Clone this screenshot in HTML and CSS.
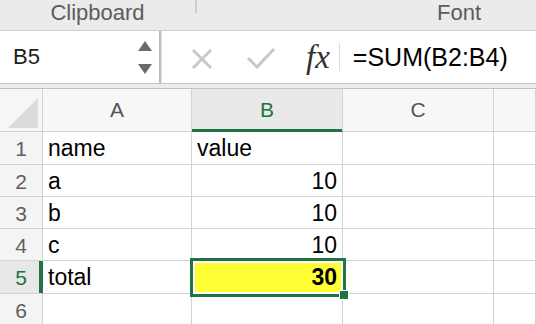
FILE: index.html
```html
<!DOCTYPE html>
<html lang="en">

<head>
  <meta charset="utf-8">
  <meta name="viewport" content="width=device-width, initial-scale=1">
  <title>Sheet</title>
  <link rel="stylesheet" href="styles.css">
</head>

<body>
  <!-- Ribbon group labels -->
  <div class="ribbon">
    <div class="group clip">Clipboard</div>
    <div class="group-sep"></div>
    <div class="group font">Font</div>
  </div>

  <!-- Name box + formula bar -->
  <div class="fbar">
    <div class="namebox">
      <span class="ref">B5</span>
      <span class="spin">
        <svg width="14" height="10" viewBox="0 0 14 10"><path d="M7 0 L14 10 L0 10 Z" fill="#6b6b6b"/></svg>
        <svg width="14" height="10" viewBox="0 0 14 10"><path d="M0 0 L14 0 L7 10 Z" fill="#6b6b6b"/></svg>
      </span>
    </div>
    <div class="formula">
      <svg class="x-icon" width="22" height="22" viewBox="0 0 22 22">
        <path d="M2 2 L20 20 M20 2 L2 20" stroke="#c8c8c8" stroke-width="3" fill="none"/>
      </svg>
      <svg class="ok-icon" width="30" height="24" viewBox="0 0 30 24">
        <path d="M2 12 L11 21 L28 3" stroke="#c8c8c8" stroke-width="3" fill="none"/>
      </svg>
      <span class="fx">fx</span>
      <span class="fsep"></span>
      <span class="ftext">=SUM(B2:B4)</span>
    </div>
  </div>
  <div class="band"></div>

  <!-- Grid -->
  <div class="sheet">
    <div class="corner">
      <svg width="30" height="30" viewBox="0 0 30 30"><path d="M30 0 L30 30 L0 30 Z" fill="#dcdcdc"/></svg>
    </div>
    <div class="colh">A</div>
    <div class="colh sel">B</div>
    <div class="colh">C</div>
    <div class="colh"></div>

    <div class="rowh">1</div>
    <div class="cell">name</div>
    <div class="cell">value</div>
    <div class="cell"></div>
    <div class="cell"></div>

    <div class="rowh">2</div>
    <div class="cell">a</div>
    <div class="cell num">10</div>
    <div class="cell"></div>
    <div class="cell"></div>

    <div class="rowh">3</div>
    <div class="cell">b</div>
    <div class="cell num">10</div>
    <div class="cell"></div>
    <div class="cell"></div>

    <div class="rowh">4</div>
    <div class="cell">c</div>
    <div class="cell num">10</div>
    <div class="cell"></div>
    <div class="cell"></div>

    <div class="rowh sel">5</div>
    <div class="cell">total</div>
    <div class="cell num active">30
      <div class="selbox"><div class="handle"></div></div>
    </div>
    <div class="cell"></div>
    <div class="cell"></div>

    <div class="rowh">6</div>
    <div class="cell"></div>
    <div class="cell"></div>
    <div class="cell"></div>
    <div class="cell"></div>
  </div>
</body>

</html>
```

FILE: styles.css
```css
/* Page */
body {
  margin: 0;
  width: 536px;
  height: 324px;
  overflow: hidden;
  background: #fff;
  font-family: "Liberation Sans", Arial, sans-serif;
}

/* Ribbon labels */
.ribbon {
  display: flex;
  height: 30px;
  background: #ebebeb;
  border-bottom: 1px solid #cfcfcf;
  color: #5c5c5c;
  font-size: 22px;
  line-height: 25px;
}

.group.clip {
  width: 195px;
  text-align: center;
}

.group-sep {
  width: 2px;
  height: 13px;
  background: #cdcdcd;
}

.group.font {
  margin-left: 240px;
}

/* Formula bar */
.fbar {
  display: flex;
  height: 52px;
  border-bottom: 1px solid #c4c4c4;
}

.namebox {
  display: flex;
  align-items: center;
  width: 159px;
  border-right: 2px solid #bdbdbd;
  background: #fff;
}

.ref {
  margin-left: 13px;
  font-size: 22px;
  color: #1e1e1e;
}

.spin {
  display: flex;
  flex-direction: column;
  gap: 13px;
  margin-left: auto;
  margin-right: 7px;
  margin-top: 1px;
}

.formula {
  flex: 1;
  display: flex;
  align-items: center;
  border-left: 1px solid #e2e2e2;
  background: #fff;
}

.x-icon {
  margin-left: 29px;
  margin-top: 3px;
}

.ok-icon {
  margin-left: 33px;
  margin-top: 2px;
}

.fx {
  margin-left: 30px;
  font-family: "Liberation Serif", serif;
  font-style: italic;
  font-size: 33px;
  color: #333;
}

.fsep {
  width: 1px;
  height: 28px;
  margin-left: 9px;
  background: #dcdcdc;
}

.ftext {
  margin-left: 13px;
  font-size: 25px;
  color: #000;
}

.band {
  height: 4px;
  background: #ececec;
  border-bottom: 1px solid #c2c2c2;
}

/* Grid */
.sheet {
  display: grid;
  grid-template-columns: 43px 149px 151px 151px 42px;
  grid-template-rows: 43px 33px 32px 32px 32px 33px 32px;
}

.sheet > div {
  box-sizing: border-box;
  border-right: 1px solid #d3d3d3;
  border-bottom: 1px solid #d3d3d3;
}

.corner {
  display: flex;
  justify-content: flex-end;
  align-items: flex-end;
  padding: 0 4px 3px 0;
  background: #f6f6f6;
}

.colh {
  background: #f7f7f7;
  color: #555;
  font-size: 21px;
  line-height: 42px;
  text-align: center;
}

.colh.sel {
  background: #e9e9e9;
  color: #217346;
  border-bottom-color: #217346 !important;
  box-shadow: inset 0 -2px 0 #217346;
}

.rowh {
  background: #f4f4f4;
  color: #5f5f5f;
  font-size: 21px;
  line-height: 33px;
  text-align: center;
}

.rowh.sel {
  background: #e8e8e8;
  color: #217346;
  border-right-color: #217346 !important;
  box-shadow: inset -3px 0 0 #217346;
}

.cell {
  padding: 0 5px;
  font-size: 23px;
  line-height: 32px;
  color: #000;
}

.cell.num {
  text-align: right;
}

.cell.active {
  position: relative;
  background: #ffff33;
  font-weight: bold;
}

/* Selection outline over B5 */
.selbox {
  position: absolute;
  top: -3px;
  left: -2px;
  right: -4px;
  bottom: -4px;
  border: 3px solid #217346;
  box-shadow: inset 0 0 0 2px #fff;
}

.handle {
  position: absolute;
  right: -6px;
  bottom: -6px;
  width: 8px;
  height: 8px;
  background: #217346;
  border: 1.5px solid #fff;
}
```
